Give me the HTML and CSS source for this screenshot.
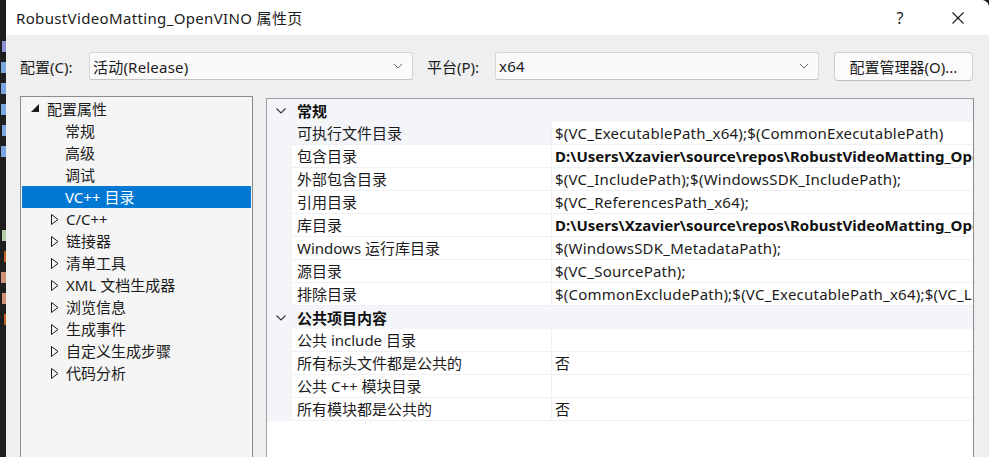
FILE: index.html
```html
<!DOCTYPE html>
<html lang="zh-CN">
<head>
<meta charset="utf-8">
<title>RobustVideoMatting_OpenVINO 属性页</title>
<link rel="stylesheet" href="styles.css">
</head>
<body>
<div class="screen">
  <div class="editor">
    <div class="eline"><i class="frag c-purple w4"></i></div>
    <div class="eline"><i class="frag c-blue w5"></i></div>
    <div class="eline"><i class="frag c-blue w5"></i></div>
    <div class="eline"><i class="frag c-blue w5"></i></div>
    <div class="eline"><i class="frag c-blue w4"></i></div>
    <div class="eline"><i class="frag c-blue w5"></i></div>
    <div class="eline"></div>
    <div class="eline"></div>
    <div class="eline"></div>
    <div class="eline"><i class="frag c-green w4"></i></div>
    <div class="eline"><i class="frag c-orange w2"></i></div>
    <div class="eline"><i class="frag c-tan w5"></i></div>
    <div class="eline"><i class="frag c-tan w4"></i></div>
    <div class="eline"><i class="frag c-orange w2"></i></div>
  </div>
  <div class="dialog">
    <div class="titlebar">
      <span class="title">RobustVideoMatting_OpenVINO 属性页</span>
      <span class="tb-btn help">?</span>
      <span class="tb-btn close">
        <svg width="12" height="12" viewBox="0 0 12 12"><path d="M0.5 0.5 L11.5 11.5 M11.5 0.5 L0.5 11.5" stroke="#1b1b1b" stroke-width="1.1" fill="none"/></svg>
      </span>
    </div>
    <div class="content">
      <div class="toolbar">
        <span class="lbl lbl-config">配置(C):</span>
        <div class="combo">
          <span class="combo-text">活动(Release)</span>
          <svg class="chev" width="10" height="6" viewBox="0 0 10 6"><path d="M1 1 L5 5 L9 1" stroke="#6a6a6a" stroke-width="1" fill="none"/></svg>
        </div>
        <span class="lbl lbl-platform">平台(P):</span>
        <div class="combo">
          <span class="combo-text">x64</span>
          <svg class="chev" width="10" height="6" viewBox="0 0 10 6"><path d="M1 1 L5 5 L9 1" stroke="#6a6a6a" stroke-width="1" fill="none"/></svg>
        </div>
        <button class="btn">配置管理器(O)...</button>
      </div>
      <div class="main">
        <div class="tree">
          <div class="node root">
            <svg class="tri-open" width="8" height="8" viewBox="0 0 8 8"><polygon points="8,0 8,8 0,8" fill="#1a1a1a"/></svg>
            <span>配置属性</span>
          </div>
          <div class="node leaf">常规</div>
          <div class="node leaf">高级</div>
          <div class="node leaf">调试</div>
          <div class="node leaf selected">VC++ 目录</div>
          <div class="node group"><svg class="tri" width="8" height="11" viewBox="0 0 8 11"><polygon points="0.5,0.5 7,5.5 0.5,10.5" fill="none" stroke="#1a1a1a" stroke-width="1"/></svg><span>C/C++</span></div>
          <div class="node group"><svg class="tri" width="8" height="11" viewBox="0 0 8 11"><polygon points="0.5,0.5 7,5.5 0.5,10.5" fill="none" stroke="#1a1a1a" stroke-width="1"/></svg><span>链接器</span></div>
          <div class="node group"><svg class="tri" width="8" height="11" viewBox="0 0 8 11"><polygon points="0.5,0.5 7,5.5 0.5,10.5" fill="none" stroke="#1a1a1a" stroke-width="1"/></svg><span>清单工具</span></div>
          <div class="node group"><svg class="tri" width="8" height="11" viewBox="0 0 8 11"><polygon points="0.5,0.5 7,5.5 0.5,10.5" fill="none" stroke="#1a1a1a" stroke-width="1"/></svg><span>XML 文档生成器</span></div>
          <div class="node group"><svg class="tri" width="8" height="11" viewBox="0 0 8 11"><polygon points="0.5,0.5 7,5.5 0.5,10.5" fill="none" stroke="#1a1a1a" stroke-width="1"/></svg><span>浏览信息</span></div>
          <div class="node group"><svg class="tri" width="8" height="11" viewBox="0 0 8 11"><polygon points="0.5,0.5 7,5.5 0.5,10.5" fill="none" stroke="#1a1a1a" stroke-width="1"/></svg><span>生成事件</span></div>
          <div class="node group"><svg class="tri" width="8" height="11" viewBox="0 0 8 11"><polygon points="0.5,0.5 7,5.5 0.5,10.5" fill="none" stroke="#1a1a1a" stroke-width="1"/></svg><span>自定义生成步骤</span></div>
          <div class="node group"><svg class="tri" width="8" height="11" viewBox="0 0 8 11"><polygon points="0.5,0.5 7,5.5 0.5,10.5" fill="none" stroke="#1a1a1a" stroke-width="1"/></svg><span>代码分析</span></div>
        </div>
        <div class="grid">
          <div class="cat">
            <div class="gutter"><svg width="10" height="6" viewBox="0 0 10 6"><path d="M0.5 0.5 L5 5 L9.5 0.5" stroke="#333" stroke-width="1.1" fill="none"/></svg></div>
            <div class="cat-name">常规</div>
          </div>
          <div class="row active"><div class="gutter"></div><div class="name">可执行文件目录</div><div class="value">$(VC_ExecutablePath_x64);$(CommonExecutablePath)</div></div>
          <div class="row"><div class="gutter"></div><div class="name">包含目录</div><div class="value bold">D:\Users\Xzavier\source\repos\RobustVideoMatting_OpenVINO\include;$(VC_IncludePath)</div></div>
          <div class="row"><div class="gutter"></div><div class="name">外部包含目录</div><div class="value">$(VC_IncludePath);$(WindowsSDK_IncludePath);</div></div>
          <div class="row"><div class="gutter"></div><div class="name">引用目录</div><div class="value">$(VC_ReferencesPath_x64);</div></div>
          <div class="row"><div class="gutter"></div><div class="name">库目录</div><div class="value bold">D:\Users\Xzavier\source\repos\RobustVideoMatting_OpenVINO\lib;$(LibraryPath)</div></div>
          <div class="row"><div class="gutter"></div><div class="name">Windows 运行库目录</div><div class="value">$(WindowsSDK_MetadataPath);</div></div>
          <div class="row"><div class="gutter"></div><div class="name">源目录</div><div class="value">$(VC_SourcePath);</div></div>
          <div class="row"><div class="gutter"></div><div class="name">排除目录</div><div class="value">$(CommonExcludePath);$(VC_ExecutablePath_x64);$(VC_LibraryPath_x64)</div></div>
          <div class="cat">
            <div class="gutter"><svg width="10" height="6" viewBox="0 0 10 6"><path d="M0.5 0.5 L5 5 L9.5 0.5" stroke="#333" stroke-width="1.1" fill="none"/></svg></div>
            <div class="cat-name">公共项目内容</div>
          </div>
          <div class="row"><div class="gutter"></div><div class="name">公共 include 目录</div><div class="value"></div></div>
          <div class="row"><div class="gutter"></div><div class="name">所有标头文件都是公共的</div><div class="value">否</div></div>
          <div class="row"><div class="gutter"></div><div class="name">公共 C++ 模块目录</div><div class="value"></div></div>
          <div class="row"><div class="gutter"></div><div class="name">所有模块都是公共的</div><div class="value">否</div></div>
        </div>
      </div>
    </div>
  </div>
</div>
</body>
</html>
```
FILE: styles.css
```css
* { box-sizing: border-box; }
html, body { margin: 0; padding: 0; }
body {
  width: 989px;
  height: 457px;
  overflow: hidden;
  font-family: "Noto Sans", "Noto Sans CJK SC", sans-serif;
  font-size: 15px;
  color: #1b1b1b;
}
.screen {
  display: flex;
  width: 989px;
  height: 457px;
  background: #1e1e1e;
}
.editor {
  width: 6px;
  flex: none;
  overflow: hidden;
  padding-top: 36px;
}
.eline {
  height: 21px;
  display: flex;
  align-items: center;
  justify-content: flex-end;
}
.frag {
  display: block;
  height: 11px;
}
.w2 { width: 2px; }
.w4 { width: 4px; }
.w5 { width: 5px; }
.c-purple { background: #8f8fd8; }
.c-blue { background: #7aa6e0; }
.c-green { background: #b5cea8; }
.c-orange { background: #c06020; }
.c-tan { background: #ce9178; }

.dialog {
  flex: 1;
  display: flex;
  flex-direction: column;
  background: #efefef;
  border-top-right-radius: 8px;
  overflow: hidden;
}
.titlebar {
  height: 35px;
  flex: none;
  background: #ffffff;
  display: flex;
  align-items: center;
  padding-left: 10px;
}
.title {
  flex: 1;
  font-size: 15px;
  color: #1b1b1b;
  letter-spacing: 0.35px;
}
.tb-btn {
  display: flex;
  align-items: center;
  justify-content: center;
}
.help {
  width: 20px;
  font-size: 16px;
  color: #1b1b1b;
  margin-right: 41px;
}
.close {
  width: 14px;
  margin-right: 24px;
}
.content {
  flex: 1;
  padding-top: 17px;
}
.toolbar {
  display: flex;
  align-items: center;
  height: 28px;
  padding-left: 14px;
}
.lbl {
  flex: none;
  color: #1b1b1b;
}
.lbl-config { width: 69px; }
.lbl-platform { width: 68px; margin-left: 14px; }
.combo {
  width: 324px;
  height: 28px;
  flex: none;
  display: flex;
  align-items: center;
  justify-content: space-between;
  background: #fafafa;
  border: 1px solid #d6d6d6;
  border-bottom-color: #c4c4c4;
  border-radius: 3px;
  padding: 0 9px 0 3px;
}
.combo-text { color: #1b1b1b; letter-spacing: 0.2px; }
.chev { flex: none; }
.btn {
  margin-left: 15px;
  width: 139px;
  height: 29px;
  flex: none;
  background: #fbfbfb;
  border: 1px solid #d0d0d0;
  border-bottom-color: #bdbdbd;
  border-radius: 4px;
  font-family: inherit;
  font-size: 15px;
  color: #1b1b1b;
  padding: 0;
}
.main {
  display: flex;
  align-items: flex-start;
  margin-top: 16px;
  padding-left: 14px;
}
.tree {
  width: 233px;
  height: 380px;
  flex: none;
  background: #f5f5f5;
  border: 1px solid #8c8c8c;
  padding-top: 1px;
}
.node {
  height: 22px;
  line-height: 22px;
  display: flex;
  align-items: center;
  white-space: nowrap;
  color: #1b1b1b;
}
.root { padding-left: 10px; }
.root .tri-open { margin-right: 8px; margin-top: -3px; }
.leaf { padding-left: 44px; }
.group { padding-left: 30px; }
.group .tri { margin-right: 7px; }
.selected {
  background: #0078d4;
  color: #ffffff;
  margin: 0 1px;
  padding-left: 43px;
}
.grid {
  width: 708px;
  height: 380px;
  flex: none;
  margin-left: 13px;
  margin-top: 2px;
  background: #ffffff;
  border: 1px solid #a0a0a0;
  border-right-color: #8c8c8c;
  overflow: hidden;
}
.cat {
  display: flex;
  height: 23px;
  align-items: center;
  background: #f3f5f9;
}
.gutter {
  width: 25px;
  flex: none;
  align-self: stretch;
  background: #f3f5f9;
  display: flex;
  align-items: center;
  padding-left: 9px;
}
.cat-name {
  font-weight: bold;
  padding-left: 5px;
  color: #111;
}
.row {
  display: flex;
  height: 23px;
}
.name, .value {
  height: 23px;
  line-height: 22px;
  border-bottom: 1px solid #eef0f3;
  white-space: nowrap;
  overflow: hidden;
}
.name {
  width: 259px;
  flex: none;
  padding-left: 5px;
}
.row.active .name { background: #f3f5f9; }
.value {
  flex: 1;
  min-width: 0;
  border-left: 1px solid #eef0f3;
  padding-left: 3px;
  letter-spacing: 0.22px;
}
.bold { font-weight: bold; color: #111; letter-spacing: 0; }
```
